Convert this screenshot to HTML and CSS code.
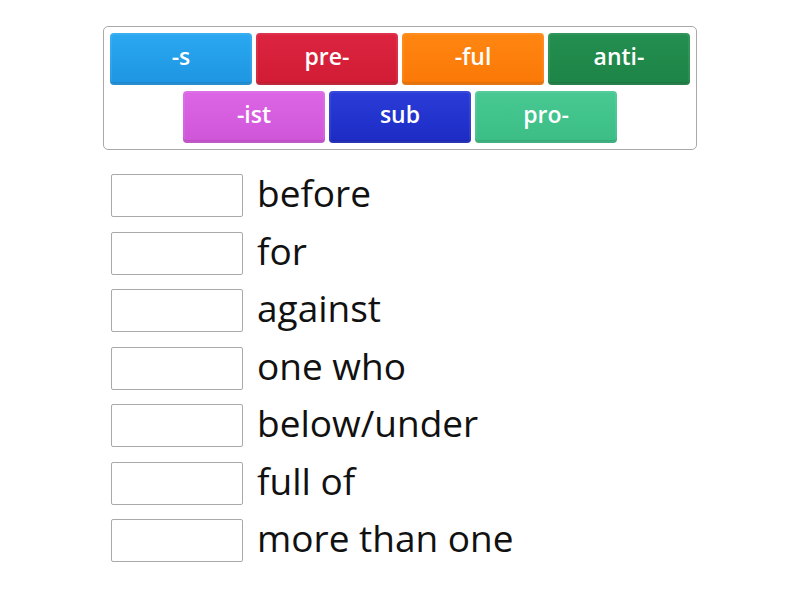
FILE: index.html
```html
<!DOCTYPE html>
<html>
<head>
<meta charset="utf-8">
<link rel="stylesheet" href="styles.css">
</head>
<body>
<div class="bank">
  <div class="row">
    <div class="tile c-blue">-s</div>
    <div class="tile c-red">pre-</div>
    <div class="tile c-orange">-ful</div>
    <div class="tile c-green">anti-</div>
  </div>
  <div class="row">
    <div class="tile c-purple">-ist</div>
    <div class="tile c-navy">sub</div>
    <div class="tile c-mint">pro-</div>
  </div>
</div>
<div class="list">
  <div class="item"><div class="slot"></div><span class="label">before</span></div>
  <div class="item"><div class="slot"></div><span class="label">for</span></div>
  <div class="item"><div class="slot"></div><span class="label">against</span></div>
  <div class="item"><div class="slot"></div><span class="label">one who</span></div>
  <div class="item"><div class="slot"></div><span class="label">below/under</span></div>
  <div class="item"><div class="slot"></div><span class="label">full of</span></div>
  <div class="item"><div class="slot"></div><span class="label">more than one</span></div>
</div>
</body>
</html>
```
FILE: styles.css
```css
html, body {
  margin: 0;
  padding: 0;
  background: #fff;
  font-family: "Open Sans", "Noto Sans", sans-serif;
}
body {
  width: 800px;
  height: 600px;
  padding-top: 26px;
  box-sizing: border-box;
}
.bank {
  width: 594px;
  margin: 0 auto;
  box-sizing: border-box;
  border: 1px solid #a9a9a9;
  border-radius: 5px;
  padding: 6px;
  display: flex;
  flex-direction: column;
  gap: 6px;
  align-items: center;
}
.row {
  display: flex;
  gap: 4px;
}
.tile {
  width: 142px;
  height: 52px;
  box-sizing: border-box;
  border-radius: 4px;
  color: #fff;
  font-size: 23px;
  font-weight: 600;
  line-height: 1;
  display: flex;
  align-items: center;
  justify-content: center;
  padding-bottom: 6px;
  box-shadow: inset 0 -3px 0 rgba(0,0,0,0.09), inset 0 0 0 2px rgba(255,255,255,0.07);
}
.c-blue { background: linear-gradient(#2aa8f0, #1e95e2); }
.c-red { background: linear-gradient(#dc2440, #d11c34); }
.c-orange { background: linear-gradient(#ff8612, #fb7806); }
.c-green { background: linear-gradient(#238f50, #1d8446); }
.c-purple { background: linear-gradient(#dc66e6, #cf55d8); }
.c-navy { background: linear-gradient(#2a3cd8, #1d2bc4); }
.c-mint { background: linear-gradient(#48c993, #3bbd85); }
.list {
  margin-top: 24px;
  margin-left: 111px;
  display: flex;
  flex-direction: column;
  gap: 14.5px;
}
.item {
  display: flex;
  align-items: center;
  height: 43px;
}
.slot {
  width: 132px;
  height: 43px;
  box-sizing: border-box;
  border: 1px solid #a9a9a9;
  border-radius: 2px;
  background: #fff;
  flex: none;
}
.label {
  margin-left: 14px;
  font-size: 37px;
  color: #111;
  line-height: 43px;
  padding-bottom: 6px;
}
```
